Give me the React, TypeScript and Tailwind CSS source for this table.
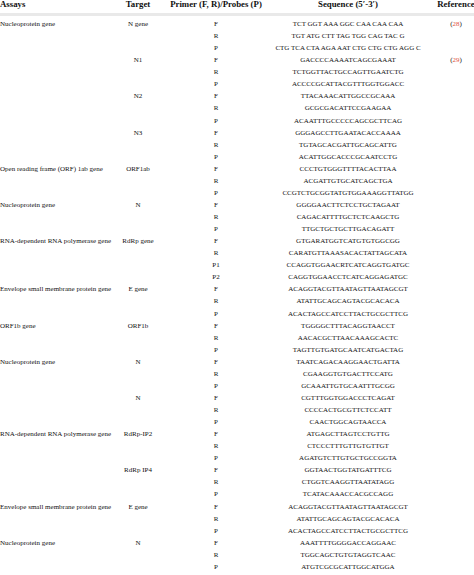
type Row = {
    assay?: string
    target?: string
    primer: string
    seq: string
    ref?: string
}

const ROWS: Row[] = [
    { assay: 'Nucleoprotein gene', target: 'N gene', primer: 'F', seq: 'TCT GGT AAA GGC CAA CAA CAA', ref: '28' },
    { primer: 'R', seq: 'TGT ATG CTT TAG TGG CAG TAC G' },
    { primer: 'P', seq: 'CTG TCA CTA AGA AAT CTG CTG CTG AGG C' },
    { target: 'N1', primer: 'F', seq: 'GACCCCAAAATCAGCGAAAT', ref: '29' },
    { primer: 'R', seq: 'TCTGGTTACTGCCAGTTGAATCTG' },
    { primer: 'P', seq: 'ACCCCGCATTACGTTTGGTGGACC' },
    { target: 'N2', primer: 'F', seq: 'TTACAAACATTGGCCGCAAA' },
    { primer: 'R', seq: 'GCGCGACATTCCGAAGAA' },
    { primer: 'P', seq: 'ACAATTTGCCCCCAGCGCTTCAG' },
    { target: 'N3', primer: 'F', seq: 'GGGAGCCTTGAATACACCAAAA' },
    { primer: 'R', seq: 'TGTAGCACGATTGCAGCATTG' },
    { primer: 'P', seq: 'ACATTGGCACCCGCAATCCTG' },
    { assay: 'Open reading frame (ORF) 1ab gene', target: 'ORF1ab', primer: 'F', seq: 'CCCTGTGGGTTTTACACTTAA' },
    { primer: 'R', seq: 'ACGATTGTGCATCAGCTGA' },
    { primer: 'P', seq: 'CCGTCTGCGGTATGTGGAAAGGTTATGG' },
    { assay: 'Nucleoprotein gene', target: 'N', primer: 'F', seq: 'GGGGAACTTCTCCTGCTAGAAT' },
    { primer: 'R', seq: 'CAGACATTTTGCTCTCAAGCTG' },
    { primer: 'P', seq: 'TTGCTGCTGCTTGACAGATT' },
    { assay: 'RNA-dependent RNA polymerase gene', target: 'RdRp gene', primer: 'F', seq: 'GTGARATGGTCATGTGTGGCGG' },
    { primer: 'R', seq: 'CARATGTTAAASACACTATTAGCATA' },
    { primer: 'P1', seq: 'CCAGGTGGAACRTCATCAGGTGATGC' },
    { primer: 'P2', seq: 'CAGGTGGAACCTCATCAGGAGATGC' },
    { assay: 'Envelope small membrane protein gene', target: 'E gene', primer: 'F', seq: 'ACAGGTACGTTAATAGTTAATAGCGT' },
    { primer: 'R', seq: 'ATATTGCAGCAGTACGCACACA' },
    { primer: 'P', seq: 'ACACTAGCCATCCTTACTGCGCTTCG' },
    { assay: 'ORF1b gene', target: 'ORF1b', primer: 'F', seq: 'TGGGGCTTTACAGGTAACCT' },
    { primer: 'R', seq: 'AACACGCTTAACAAAGCACTC' },
    { primer: 'P', seq: 'TAGTTGTGATGCAATCATGACTAG' },
    { assay: 'Nucleoprotein gene', target: 'N', primer: 'F', seq: 'TAATCAGACAAGGAACTGATTA' },
    { primer: 'R', seq: 'CGAAGGTGTGACTTCCATG' },
    { primer: 'P', seq: 'GCAAATTGTGCAATTTGCGG' },
    { target: 'N', primer: 'F', seq: 'CGTTTGGTGGACCCTCAGAT' },
    { primer: 'R', seq: 'CCCCACTGCGTTCTCCATT' },
    { primer: 'P', seq: 'CAACTGGCAGTAACCA' },
    { assay: 'RNA-dependent RNA polymerase gene', target: 'RdRp-IP2', primer: 'F', seq: 'ATGAGCTTAGTCCTGTTG' },
    { primer: 'R', seq: 'CTCCCTTTGTTGTGTTGT' },
    { primer: 'P', seq: 'AGATGTCTTGTGCTGCCGGTA' },
    { target: 'RdRp IP4', primer: 'F', seq: 'GGTAACTGGTATGATTTCG' },
    { primer: 'R', seq: 'CTGGTCAAGGTTAATATAGG' },
    { primer: 'P', seq: 'TCATACAAACCACGCCAGG' },
    { assay: 'Envelope small membrane protein gene', target: 'E gene', primer: 'F', seq: 'ACAGGTACGTTAATAGTTAATAGCGT' },
    { primer: 'R', seq: 'ATATTGCAGCAGTACGCACACA' },
    { primer: 'P', seq: 'ACACTAGCCATCCTTACTGCGCTTCG' },
    { assay: 'Nucleoprotein gene', target: 'N', primer: 'F', seq: 'AAATTTTGGGGACCAGGAAC' },
    { primer: 'R', seq: 'TGGCAGCTGTGTAGGTCAAC' },
    { primer: 'P', seq: 'ATGTCGCGCATTGGCATGGA' },
]

const COLS = 'grid grid-cols-[118px_40px_116px_148px_68px]'

export default function App() {
    return (
        <div className="w-[474px] h-[575px] overflow-hidden bg-white text-[#111] font-['Liberation_Serif',serif] whitespace-nowrap">
            {/* header */}
            <div className={`${COLS} h-[16px] border-b-[3px] border-[#e9e9e9] text-[8.8px] font-bold leading-[8px]`}>
                <div>Assays</div>
                <div className="text-center">Target</div>
                <div className="text-center">Primer (F, R)/Probes (P)</div>
                <div className="text-center">Sequence (5′-3′)</div>
                <div className="text-center">Reference</div>
            </div>

            <div className="pt-[2px] text-[7px]">
                {ROWS.map((r, i) => (
                    <div key={`row-${i}`} className={`${COLS} h-[12.07px] leading-[12.07px]`}>
                        <div>{r.assay ?? ''}</div>
                        <div className="text-center">{r.target ?? ''}</div>
                        <div className="text-center">{r.primer}</div>
                        <div className="text-center">{r.seq}</div>
                        <div className="text-center">
                            {r.ref && (
                                <span>(<span className="text-[#e0503c]">{r.ref}</span>)</span>
                            )}
                        </div>
                    </div>
                ))}
            </div>
        </div>
    )
}
